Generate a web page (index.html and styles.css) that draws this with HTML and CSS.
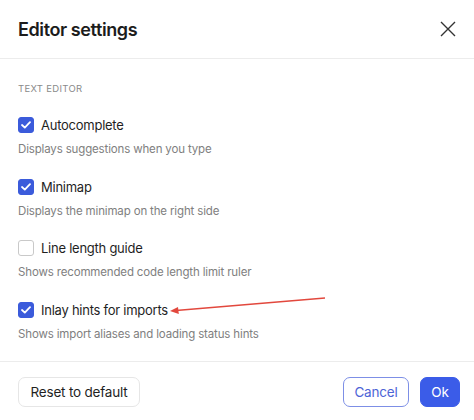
FILE: index.html
```html
<!DOCTYPE html>
<html>
<head>
<meta charset="utf-8">
<link rel="stylesheet" href="styles.css">
</head>
<body>
<div class="dialog">
  <header class="head">
    <h1 class="title">Editor settings</h1>
    <svg class="close" width="16" height="16" viewBox="0 0 16 16"><path d="M1 1L15 15M15 1L1 15" stroke="#333" stroke-width="1.4" fill="none"/></svg>
  </header>
  <main class="body">
    <div class="section">TEXT EDITOR</div>
    <div class="item">
      <div class="row"><span class="cb on"><svg width="10" height="8" viewBox="0 0 10 8"><path d="M1 4L3.8 6.6L9 1.2" stroke="#fff" stroke-width="1.8" fill="none" stroke-linecap="round" stroke-linejoin="round"/></svg></span><span class="label">Autocomplete</span></div>
      <div class="desc">Displays suggestions when you type</div>
    </div>
    <div class="item">
      <div class="row"><span class="cb on"><svg width="10" height="8" viewBox="0 0 10 8"><path d="M1 4L3.8 6.6L9 1.2" stroke="#fff" stroke-width="1.8" fill="none" stroke-linecap="round" stroke-linejoin="round"/></svg></span><span class="label">Minimap</span></div>
      <div class="desc">Displays the minimap on the right side</div>
    </div>
    <div class="item">
      <div class="row"><span class="cb"></span><span class="label">Line length guide</span></div>
      <div class="desc">Shows recommended code length limit ruler</div>
    </div>
    <div class="item last">
      <div class="row"><span class="cb on"><svg width="10" height="8" viewBox="0 0 10 8"><path d="M1 4L3.8 6.6L9 1.2" stroke="#fff" stroke-width="1.8" fill="none" stroke-linecap="round" stroke-linejoin="round"/></svg></span><span class="label">Inlay hints for imports</span></div>
      <div class="desc">Shows import aliases and loading status hints</div>
      <svg class="arrow" width="160" height="20" viewBox="0 0 160 20"><path d="M157 2L8 14.5" stroke="#e2483d" stroke-width="1.5" fill="none"/><path d="M2 15L10 11L10.8 18Z" fill="#e2483d"/></svg>
    </div>
  </main>
  <footer class="foot">
    <button class="btn reset">Reset to default</button>
    <div class="actions">
      <button class="btn cancel">Cancel</button>
      <button class="btn ok">Ok</button>
    </div>
  </footer>
</div>
</body>
</html>
```
FILE: styles.css
```css
html, body { margin: 0; padding: 0; background: #fff; }
body { font-family: Inter, "Noto Sans", sans-serif; color: #1f1f1f; }
.dialog { width: 474px; height: 420px; display: flex; flex-direction: column; }
.head { height: 59px; flex: none; display: flex; align-items: center; justify-content: space-between; padding: 0 18px; border-bottom: 1.5px solid #ececec; box-sizing: border-box; }
.title { margin: 0; font-size: 18px; font-weight: 600; color: #1c1c1c; letter-spacing: -0.4px; }
.body { height: 303px; flex: none; box-sizing: border-box; padding: 23px 18px 0; border-bottom: 1.5px solid #ececec; }
.section { font-size: 9.5px; letter-spacing: 0.3px; color: #8a8a8a; height: 14px; line-height: 14px; margin-bottom: 20px; }
.item { position: relative; margin-bottom: 20.6px; }
.item.last { margin-bottom: 0; }
.row { display: flex; align-items: center; gap: 7px; height: 18px; }
.cb { width: 16px; height: 16px; box-sizing: border-box; border-radius: 3px; border: 1px solid #c9c9c9; display: flex; align-items: center; justify-content: center; background: #fff; }
.cb.on { background: #3b5bdb; border-color: #3b5bdb; }
.label { font-size: 13px; letter-spacing: -0.25px; color: #1f1f1f; }
.desc { margin-top: 7px; font-size: 11.5px; letter-spacing: -0.15px; color: #808080; line-height: 16px; }
.arrow { position: absolute; left: 150px; top: -5px; }
.foot { flex: 1; display: flex; align-items: center; justify-content: space-between; padding: 2px 14px 0 18px; }
.actions { display: flex; gap: 11px; }
.btn { font-family: Inter, "Noto Sans", sans-serif; font-size: 13.5px; letter-spacing: -0.2px; height: 30px; border-radius: 7px; padding: 0; background: #fff; cursor: pointer; white-space: nowrap; }
.reset { border: 1px solid #e6e6e6; color: #1f1f1f; width: 122px; }
.cancel { border: 1px solid #7d8fe6; color: #4d64d6; width: 66px; }
.ok { border: 1px solid #3b5ce8; background: #3b5ce8; color: #fff; width: 40px; }
```
